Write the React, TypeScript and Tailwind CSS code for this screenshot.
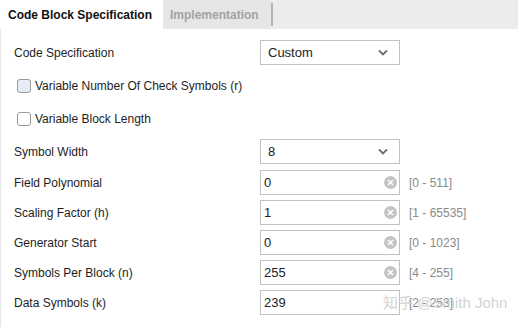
import React from "react";

const FONT = { fontFamily: '"Liberation Sans", Arial, "Noto Sans CJK SC", sans-serif' };

function Chevron() {
  return (
    <svg width="10" height="7" viewBox="0 0 10 7" className="shrink-0">
      <path d="M1 1.5 L5 5.5 L9 1.5" fill="none" stroke="#6e6e6e" strokeWidth="1.8" />
    </svg>
  );
}

function ClearIcon() {
  return (
    <svg width="13" height="13" viewBox="0 0 13 13" className="shrink-0">
      <circle cx="6.5" cy="6.5" r="6.5" fill="#c4c4c4" />
      <path d="M4 4 L9 9 M9 4 L4 9" stroke="#ffffff" strokeWidth="1.6" />
    </svg>
  );
}

function Select({ value }: { value: string }) {
  return (
    <div className="flex items-center justify-between w-[140px] h-[25px] border border-[#c2c2c2] bg-white pl-[7px] pr-[11px] text-[13px] text-[#222]">
      <span>{value}</span>
      <Chevron />
    </div>
  );
}

function NumberField({ value, range, clear = true }: { value: string; range: string; clear?: boolean }) {
  return (
    <div className="flex items-center">
      <div className="flex items-center justify-between w-[140px] h-[25px] border border-[#c2c2c2] bg-white pl-[3px] pr-[2px] text-[13px] text-[#222]">
        <span>{value}</span>
        {clear && <ClearIcon />}
      </div>
      <span className="ml-[9px] text-[12px] text-[#8a8a8a]">{range}</span>
    </div>
  );
}

function Row({ label, children, className = "" }: { label: string; children: React.ReactNode; className?: string }) {
  return (
    <div className={"flex items-center " + className}>
      <div className="w-[246px] text-[12px] text-[#1e1e1e]">{label}</div>
      {children}
    </div>
  );
}

function Checkbox({ label, tinted, className = "" }: { label: string; tinted?: boolean; className?: string }) {
  return (
    <div className={"flex items-center h-[20px] pl-[3px] " + className}>
      <div
        className={
          "w-[14px] h-[14px] rounded-[3px] border border-[#9a9a9a] " +
          (tinted ? "bg-[#e6edf8]" : "bg-white")
        }
      />
      <span className="ml-[4px] text-[12px] text-[#1e1e1e]">{label}</span>
    </div>
  );
}

export default function App() {
  return (
    <div className="relative w-[518px] h-[327px] bg-white overflow-hidden" style={FONT}>
      <div className="flex h-[29px] bg-[#ececec]">
        <div className="flex items-center w-[163px] bg-white pl-[8px] text-[12px] font-bold text-[#111]">
          Code Block Specification
        </div>
        <div className="flex items-center w-[108px] bg-[#e6e6e6] pl-[7px] text-[12px] font-bold text-[#a3a3a3]">
          Implementation
        </div>
        <div className="w-[2px] h-[23px] mt-[3px] bg-[#b3b3b3]" />
      </div>

      <div className="flex flex-col pl-[13px] border-l border-[#e6e6e6] h-[298px]">
        <Row label="Code Specification" className="mt-[11px]">
          <Select value="Custom" />
        </Row>
        <Checkbox label="Variable Number Of Check Symbols (r)" tinted className="mt-[11px]" />
        <Checkbox label="Variable Block Length" className="mt-[13px]" />
        <Row label="Symbol Width" className="mt-[10px]">
          <Select value="8" />
        </Row>
        <Row label="Field Polynomial" className="mt-[6px]">
          <NumberField value="0" range="[0 - 511]" />
        </Row>
        <Row label="Scaling Factor (h)" className="mt-[5px]">
          <NumberField value="1" range="[1 - 65535]" />
        </Row>
        <Row label="Generator Start" className="mt-[5px]">
          <NumberField value="0" range="[0 - 1023]" />
        </Row>
        <Row label="Symbols Per Block (n)" className="mt-[5px]">
          <NumberField value="255" range="[4 - 255]" />
        </Row>
        <Row label="Data Symbols (k)" className="mt-[5px]">
          <NumberField value="239" range="[2 - 253]" clear={false} />
        </Row>
      </div>

      <div className="absolute left-[383px] top-[294px] text-[15px] leading-[18px] text-[#cfcfcf] opacity-90 whitespace-nowrap">
        知乎 @Smith John
      </div>
    </div>
  );
}
